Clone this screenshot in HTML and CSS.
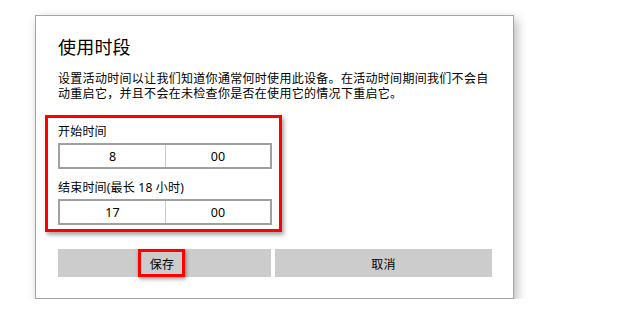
FILE: index.html
```html
<!DOCTYPE html>
<html lang="zh-CN">
<head>
<meta charset="utf-8">
<title>使用时段</title>
<link rel="stylesheet" href="styles.css">
</head>
<body>
<div class="dialog">
  <h1 class="title">使用时段</h1>
  <p class="desc">设置活动时间以让我们知道你通常何时使用此设备。在活动时间期间我们不会自动重启它，并且不会在未检查你是否在使用它的情况下重启它。</p>
  <div class="fields">
    <div class="label">开始时间</div>
    <div class="timebox">
      <div class="cell">8</div>
      <div class="cell">00</div>
    </div>
    <div class="label label-second">结束时间(最长 18 小时)</div>
    <div class="timebox">
      <div class="cell">17</div>
      <div class="cell">00</div>
    </div>
  </div>
  <div class="buttons">
    <div class="btn"><span class="mark">保存</span></div>
    <div class="btn">取消</div>
  </div>
</div>
</body>
</html>
```
FILE: styles.css
```css
html, body {
  margin: 0;
  padding: 0;
  background: #ffffff;
}
body {
  font-family: "Noto Sans", "Noto Sans CJK SC", sans-serif;
  color: #000;
}
.dialog {
  margin: 15px 0 0 35px;
  width: 434px;
  height: 264px;
  padding: 18px 21px 0 22px;
  border: 1px solid #a4a4a4;
  background: #fff;
  box-shadow: 3px 4px 10px rgba(0, 0, 0, 0.28);
  box-sizing: content-box;
}
.title {
  margin: 0;
  font-family: "Noto Sans CJK SC", sans-serif;
  font-weight: 400;
  font-size: 18px;
  line-height: 24px;
  letter-spacing: 0.2px;
}
.desc {
  margin: 12px 0 0 0;
  font-family: "Noto Sans CJK SC", sans-serif;
  font-size: 12px;
  letter-spacing: 0.3px;
  line-height: 15px;
}
.fields {
  margin: 15px 0 0 -13px;
  width: 221px;
  padding: 6px 0 4px 10px;
  border: 3px solid #ff0000;
  box-shadow: 2px 3px 4px rgba(0, 0, 0, 0.35);
}
.label {
  font-size: 12px;
  line-height: 16px;
  letter-spacing: 0.2px;
}
.label-second {
  margin-top: 11px;
}
.timebox {
  margin-top: 3px;
  width: 214px;
  height: 26px;
  box-sizing: border-box;
  border: 2px solid #a0a0a0;
  display: grid;
  grid-template-columns: 1fr 1fr;
}
.cell {
  display: flex;
  align-items: center;
  justify-content: center;
  font-size: 12.5px;
}
.cell + .cell {
  border-left: 1px solid #c8c8c8;
}
.buttons {
  margin-top: 17px;
  display: grid;
  grid-template-columns: 213px 217px;
  gap: 4px;
}
.btn {
  height: 28px;
  background: #cccccc;
  display: flex;
  align-items: center;
  justify-content: center;
  font-family: "Noto Sans CJK SC", sans-serif;
  font-size: 12px;
  letter-spacing: 0.3px;
}
.mark {
  height: 28px;
  box-sizing: border-box;
  padding: 0 8px 0 9px;
  display: flex;
  align-items: center;
  border: 3px solid #ff0000;
  box-shadow: 1px 2px 4px rgba(0, 0, 0, 0.4);
  margin-right: 6px;
}
```
